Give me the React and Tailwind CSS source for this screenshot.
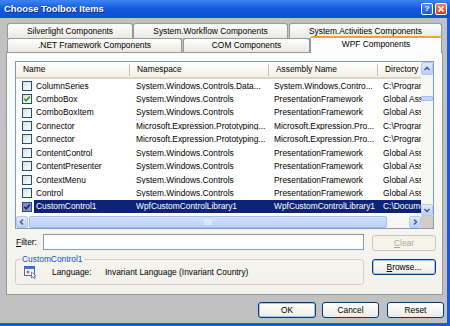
import React from "react";

const rows = [
  { name: "ColumnSeries", ns: "System.Windows.Controls.Data...", asm: "System.Windows.Contro...", dir: "C:\\Program Files" },
  { name: "ComboBox", checked: true, ns: "System.Windows.Controls", asm: "PresentationFramework", dir: "Global Assembly Cache" },
  { name: "ComboBoxItem", ns: "System.Windows.Controls", asm: "PresentationFramework", dir: "Global Assembly Cache" },
  { name: "Connector", ns: "Microsoft.Expression.Prototyping...", asm: "Microsoft.Expression.Pro...", dir: "C:\\Program Files" },
  { name: "Connector", ns: "Microsoft.Expression.Prototyping...", asm: "Microsoft.Expression.Pro...", dir: "C:\\Program Files" },
  { name: "ContentControl", ns: "System.Windows.Controls", asm: "PresentationFramework", dir: "Global Assembly Cache" },
  { name: "ContentPresenter", ns: "System.Windows.Controls", asm: "PresentationFramework", dir: "Global Assembly Cache" },
  { name: "ContextMenu", ns: "System.Windows.Controls", asm: "PresentationFramework", dir: "Global Assembly Cache" },
  { name: "Control", ns: "System.Windows.Controls", asm: "PresentationFramework", dir: "Global Assembly Cache" },
  { name: "CustomControl1", checked: true, selected: true, ns: "WpfCustomControlLibrary1", asm: "WpfCustomControlLibrary1", dir: "C:\\Documents and Settings" },
];

function Check({ checked, selected }) {
  return (
    <div
      className={`w-[10px] h-[10px] border border-[#1c5180] flex items-center justify-center ${
        selected ? "bg-[#8a8ec6]" : "bg-gradient-to-br from-[#dcdcd5] to-white"
      }`}
    >
      {checked && (
        <svg width="8" height="8" viewBox="0 0 8 8">
          <path d="M1.2 3.8 L3.1 5.8 L6.8 1.6" stroke={selected ? "#1b2470" : "#21a121"} strokeWidth="1.6" fill="none" />
        </svg>
      )}
    </div>
  );
}

const arrowPaths = {
  up: "M2.5 6 L5 3.5 L7.5 6",
  down: "M2.5 4 L5 6.5 L7.5 4",
  left: "M6 2.5 L3.5 5 L6 7.5",
  right: "M4 2.5 L6.5 5 L4 7.5",
};

function SBtn({ dir, tall }) {
  return (
    <div
      className={`w-[12px] ${tall ? "h-[13px]" : "h-[12px]"} shrink-0 rounded-[2px] border border-[#b4c8f3] bg-gradient-to-b from-[#e2ebfe] to-[#b9cffb] flex items-center justify-center`}
    >
      <svg width="10" height="10" viewBox="0 0 10 10">
        <path d={arrowPaths[dir]} stroke="#4d6185" strokeWidth="1.6" fill="none" />
      </svg>
    </div>
  );
}

function Tab({ className, children }) {
  return (
    <div
      className={`h-full border border-b-0 border-[#919b9c] rounded-t-[3px] bg-gradient-to-b from-white to-[#e9e8e2] flex items-center justify-center whitespace-nowrap ${className}`}
    >
      {children}
    </div>
  );
}

function HeadCell({ className, children }) {
  return (
    <div className={`h-full flex items-center justify-between shrink-0 ${className}`}>
      <span className="pl-[7px] whitespace-nowrap">{children}</span>
      <div className="w-px h-[12px] bg-[#c9c6b6]" />
    </div>
  );
}

function XPButton({ className, children, focus }) {
  return (
    <div
      className={`h-[16px] rounded-[3px] border border-[#003c74] bg-gradient-to-b from-white to-[#ecebe3] flex items-center justify-center ${
        focus ? "shadow-[inset_0_0_0_1px_#a9c3f1]" : ""
      } ${className}`}
    >
      {children}
    </div>
  );
}

export default function App() {
  return (
    <div className="w-[450px] h-[326px] overflow-hidden flex flex-col bg-[#c1c1c1] font-['Liberation_Sans',Arial,sans-serif] text-[8.4px] leading-none text-black">
      {/* Title bar */}
      <div className="h-[18px] shrink-0 flex items-center justify-between pl-[4px] pr-[3px] bg-gradient-to-b from-[#3d84f2] via-[#1259dd] to-[#0f50d4]">
        <span className="text-white font-bold text-[9.4px] [text-shadow:1px_1px_0_#0a2a7a]">
          Choose Toolbox Items
        </span>
        <div className="flex items-center gap-[2px]">
          <div className="w-[12px] h-[12px] rounded-[2px] border border-white bg-gradient-to-b from-[#4a8cf5] to-[#1e5bd6] flex items-center justify-center text-white font-bold text-[8px]">
            ?
          </div>
          <div className="w-[12px] h-[12px] rounded-[2px] border border-white bg-gradient-to-b from-[#ec8462] to-[#c9431f] flex items-center justify-center">
            <svg width="8" height="8" viewBox="0 0 8 8">
              <path d="M1.5 1.5 L6.5 6.5 M6.5 1.5 L1.5 6.5" stroke="white" strokeWidth="1.6" />
            </svg>
          </div>
        </div>
      </div>

      <div className="flex-1 flex min-w-0">
        {/* Body */}
        <div className="w-[447px] min-w-0 shrink-0 flex flex-col pl-[6px] pr-[4px] pt-[5px]">
          {/* Tabs row 1 */}
          <div className="flex h-[15px] shrink-0">
            <Tab className="ml-[1px] w-[126px]">Silverlight Components</Tab>
            <Tab className="w-[155px]">System.Workflow Components</Tab>
            <Tab className="ml-[1px] w-[153px]">System.Activities Components</Tab>
          </div>
          {/* Tabs row 2 */}
          <div className="flex h-[14px] shrink-0">
            <Tab className="ml-[1px] w-[175px]">.NET Framework Components</Tab>
            <Tab className="ml-[1px] w-[127px]">COM Components</Tab>
            <div className="relative z-10 w-[132px] h-[17px] -mt-[2px] -mb-[1px] flex flex-col border-x border-[#919b9c] rounded-t-[3px] bg-[#fcfcfe] overflow-hidden">
              <div className="h-[2px] bg-[#f0a331] shrink-0" />
              <div className="flex-1 flex items-center justify-center pb-[3px]">WPF Components</div>
            </div>
          </div>

          {/* Panel */}
          <div className="w-[437px] border border-[#919b9c] bg-gradient-to-b from-[#fdfdfe] to-[#f3f2ec] pl-[8px] pr-[6px] pt-[8px] pb-[9px]">
            {/* List view */}
            <div className="w-[419px] h-[168px] border border-[#7f9db9] bg-white flex flex-col overflow-hidden">
              <div className="flex h-[154px]">
                <div className="w-[405px] shrink-0 overflow-hidden flex flex-col">
                  {/* Header */}
                  <div className="h-[17px] shrink-0 flex bg-gradient-to-b from-white to-[#f3f1e6] border-b-2 border-[#d9d5c5]">
                    <HeadCell className="w-[114px]">Name</HeadCell>
                    <HeadCell className="w-[139px]">Namespace</HeadCell>
                    <HeadCell className="w-[109px]">Assembly Name</HeadCell>
                    <div className="h-full flex items-center pl-[7px] whitespace-nowrap">Directory</div>
                  </div>
                  {/* Rows */}
                  <div className="flex-1 overflow-hidden">
                    {rows.map((r, i) => (
                      <div key={i} className="h-[13.45px] flex items-center">
                        <div className="w-[18px] h-full shrink-0 flex items-center pl-[6px]">
                          <Check checked={r.checked} selected={r.selected} />
                        </div>
                        <div
                          className={`w-[387px] h-full flex items-center whitespace-nowrap overflow-hidden ${
                            r.selected ? "bg-[#0d237a] text-white" : ""
                          }`}
                        >
                          <div className="w-[96px] shrink-0 pl-[2px] overflow-hidden">{r.name}</div>
                          <div className="w-[139px] shrink-0 pl-[6px] overflow-hidden">{r.ns}</div>
                          <div className="w-[109px] shrink-0 pl-[5px] overflow-hidden">{r.asm}</div>
                          <div className="w-[80px] shrink-0 pl-[5px] overflow-hidden">{r.dir}</div>
                        </div>
                      </div>
                    ))}
                  </div>
                </div>
                {/* Vertical scrollbar */}
                <div className="w-[12px] shrink-0 flex flex-col bg-[#f6f6f2]">
                  <SBtn dir="up" tall />
                  <div className="flex-1">
                    <div className="mt-[21px] h-[5px] rounded-[1px] border border-[#a7bdf0] bg-[#c4d6fb]" />
                  </div>
                  <SBtn dir="down" />
                </div>
              </div>
              {/* Horizontal scrollbar */}
              <div className="flex-1 flex bg-[#f6f6f2]">
                <SBtn dir="left" />
                <div className="flex-1 flex">
                  <div className="ml-[1px] w-[358px] h-full rounded-[2px] border border-[#a7bdf0] bg-gradient-to-b from-[#d4e1fd] to-[#b9cefa] flex items-center justify-center">
                    <svg width="8" height="6" viewBox="0 0 8 6">
                      <path d="M1 0 V6 M3 0 V6 M5 0 V6 M7 0 V6" stroke="#eef3ff" strokeWidth="1" />
                    </svg>
                  </div>
                </div>
                <SBtn dir="right" />
                <div className="w-[12px] shrink-0 bg-[#d0cec7]" />
              </div>
            </div>

            {/* Filter row */}
            <div className="mt-[5px] flex h-[16px]">
              <div className="w-[349px] flex items-center">
                <span className="w-[28px] pl-[1px]">
                  <span className="underline">F</span>ilter:
                </span>
                <div className="flex-1 h-full border border-[#7f9db9] bg-white" />
              </div>
              <div className="ml-[8px] w-[64px] mt-[1px] h-[16px] rounded-[3px] border border-[#c9c7ba] bg-[#f5f4ea] text-[#aca899] flex items-center justify-center">
                <span>
                  <span className="underline">C</span>lear
                </span>
              </div>
            </div>

            {/* Group row */}
            <div className="mt-[4px] flex">
              <fieldset className="w-[349px] min-w-0 border border-[#d0d0bf] rounded-[3px]">
                <legend className="ml-[5px] px-[1px] leading-[10px] text-[#1150d8]">CustomControl1</legend>
                <div className="h-[20px] flex items-center pb-[4px] pl-[8px]">
                  <svg width="13" height="13" viewBox="0 0 13 13" className="shrink-0">
                    <rect x="0.5" y="0.5" width="10" height="9" fill="#f4f8ff" stroke="#3569d2" />
                    <rect x="1" y="1" width="9" height="2" fill="#3d74db" />
                    <circle cx="4" cy="6" r="1.5" fill="#e25555" />
                    <path d="M7.5 6 L7.5 12 L9 10.6 L10.3 12.8 L11.3 12.3 L10.1 10.1 L12 10 Z" fill="white" stroke="#555" strokeWidth="0.7" />
                  </svg>
                  <span className="ml-[15px] w-[53px]">Language:</span>
                  <span>Invariant Language (Invariant Country)</span>
                </div>
              </fieldset>
              <XPButton className="ml-[8px] mt-[5px] w-[64px]" focus>
                <span>
                  <span className="underline">B</span>rowse...
                </span>
              </XPButton>
            </div>
          </div>

          {/* Dialog buttons */}
          <div className="mt-[7px] -mr-[1px] flex justify-end">
            <XPButton className="w-[58px] mr-[6px]" focus>OK</XPButton>
            <XPButton className="w-[57px] mr-[8px]">Cancel</XPButton>
            <XPButton className="w-[57px]">Reset</XPButton>
          </div>
        </div>
        {/* Right frame */}
        <div className="w-[3px] shrink-0 bg-[#1d58d6]" />
      </div>
      {/* Bottom frame */}
      <div className="h-[3px] shrink-0 bg-[#1d58d6]" />
    </div>
  );
}
